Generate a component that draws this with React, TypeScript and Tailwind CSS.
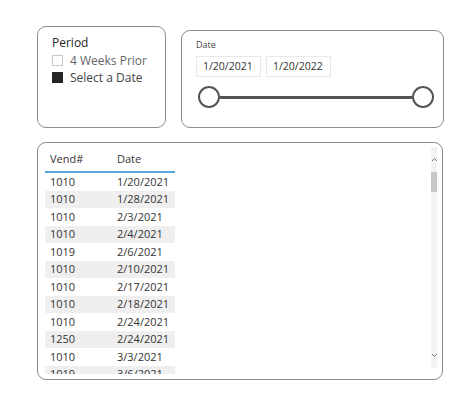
import React from "react";

const rows: [string, string][] = [
  ["1010", "1/20/2021"],
  ["1010", "1/28/2021"],
  ["1010", "2/3/2021"],
  ["1010", "2/4/2021"],
  ["1019", "2/6/2021"],
  ["1010", "2/10/2021"],
  ["1010", "2/17/2021"],
  ["1010", "2/18/2021"],
  ["1010", "2/24/2021"],
  ["1250", "2/24/2021"],
  ["1010", "3/3/2021"],
  ["1019", "3/6/2021"],
];

export default function App() {
  return (
    <div
      className="w-[474px] h-[405px] bg-white pl-[37px] pt-[26px]"
      style={{ fontFamily: '"Open Sans", "Noto Sans", sans-serif' }}
    >
      <div className="flex items-start gap-[15px]">
        <div className="w-[129px] h-[102px] border border-[#8c8c8c] rounded-[9px] pl-[14px] pt-[8px]">
          <div className="text-[12px] leading-[16px] text-[#252525]">Period</div>
          <div className="flex items-center h-[17px] mt-[1px]">
            <div className="w-[11px] h-[11px] border border-[#c8c8c8] bg-white" />
            <span className="ml-[7px] text-[12px] text-[#666666]">4 Weeks Prior</span>
          </div>
          <div className="flex items-center h-[17px]">
            <div className="w-[11px] h-[11px] bg-[#252525]" />
            <span className="ml-[7px] text-[12px] text-[#444444]">Select a Date</span>
          </div>
        </div>
        <div className="mt-[4px] w-[263px] h-[98px] border border-[#8c8c8c] rounded-[9px] pl-[14px] pt-[7px]">
          <div className="text-[9px] leading-[14px] text-[#444444]">Date</div>
          <div className="flex gap-[5px] mt-[4px]">
            <div className="w-[65px] h-[21px] border border-[#e8e8e8] flex items-center pl-[6px] text-[10.5px] text-[#333333]">
              1/20/2021
            </div>
            <div className="w-[65px] h-[21px] border border-[#e8e8e8] flex items-center pl-[6px] text-[10.5px] text-[#333333]">
              1/20/2022
            </div>
          </div>
          <div className="flex items-center mt-[8px] ml-[2px] w-[236px] h-[24px]">
            <div className="w-[22px] h-[22px] rounded-full border-2 border-[#555555] bg-white shrink-0" />
            <div className="flex-1 h-[3px] bg-[#555555]" />
            <div className="w-[22px] h-[22px] rounded-full border-2 border-[#555555] bg-white shrink-0" />
          </div>
        </div>
      </div>
      <div className="mt-[14px] w-[406px] h-[238px] border border-[#8c8c8c] rounded-[9px] flex pl-[7px] pt-[4px]">
        <div className="w-[130px] h-[227px] overflow-hidden">
          <div className="flex h-[24px] items-center text-[11px] text-[#333333]">
            <div className="w-[66px] pl-[5px]">Vend#</div>
            <div className="pl-[6px]">Date</div>
          </div>
          <div className="h-[2px] bg-[#5aa6dc]" />
          {rows.map((r, i) => (
            <div
              key={i}
              className={`flex h-[17.5px] items-center text-[11px] text-[#333333] ${
                i % 2 === 1 ? "bg-[#efefef]" : "bg-white"
              }`}
            >
              <div className="w-[66px] pl-[5px]">{r[0]}</div>
              <div className="pl-[6px]">{r[1]}</div>
            </div>
          ))}
        </div>
        <div className="flex-1" />
        <div className="w-[6px] mr-[5px] h-[221px] flex flex-col items-center bg-[#f3f3f3]">
          <div className="h-[24px] flex items-center justify-center">
            <svg width="7" height="5" viewBox="0 0 7 5">
              <path d="M1 4 L3.5 1.5 L6 4" stroke="#777" strokeWidth="1" fill="none" />
            </svg>
          </div>
          <div className="w-[6px] h-[20px] bg-[#c8c8c8] mt-[1px]" />
          <div className="flex-1" />
          <div className="h-[25px] flex items-start pt-[10px] justify-center">
            <svg width="7" height="5" viewBox="0 0 7 5">
              <path d="M1 1 L3.5 3.5 L6 1" stroke="#777" strokeWidth="1" fill="none" />
            </svg>
          </div>
        </div>
      </div>
    </div>
  );
}
